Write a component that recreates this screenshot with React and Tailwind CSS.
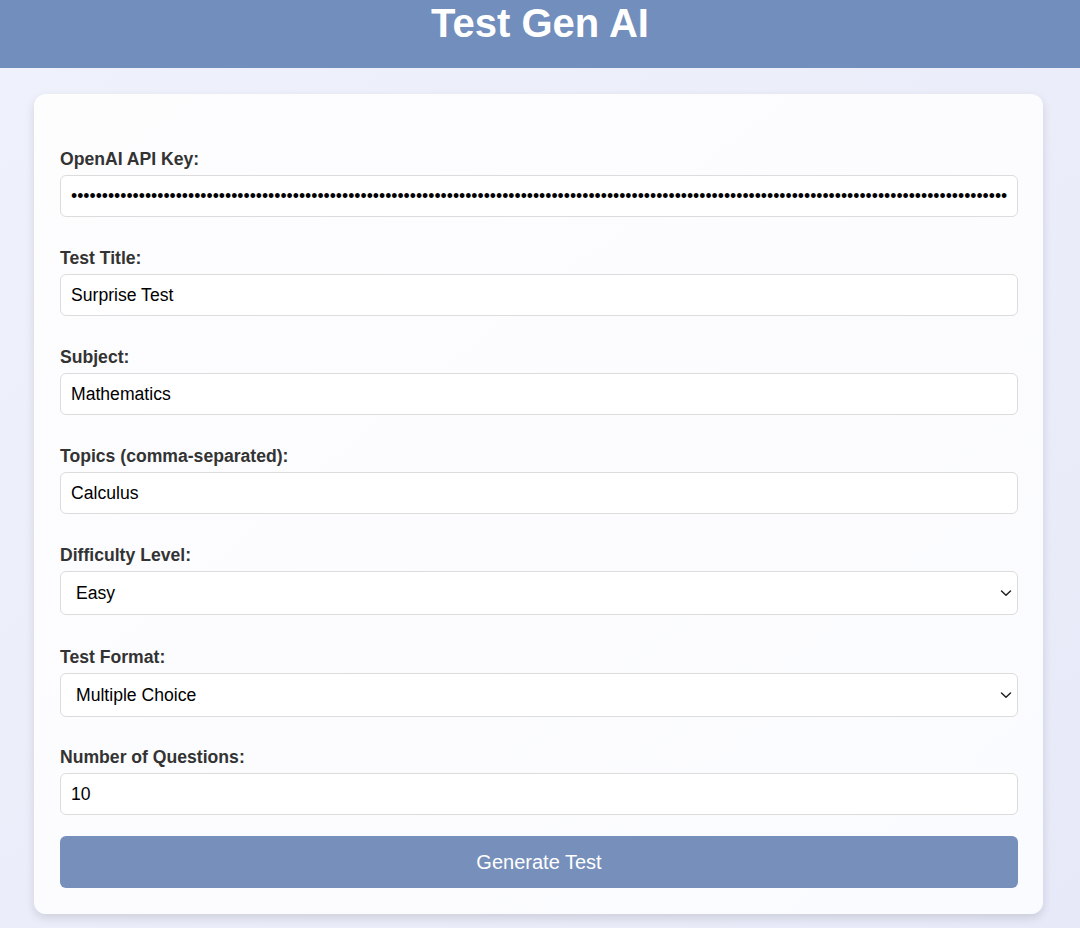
import React from "react";

const font = { fontFamily: '"Liberation Sans", Arial, sans-serif' };

function Label({ children }) {
  return (
    <label className="block text-[17.6px] font-bold leading-[20px] text-[#333333] mb-[6px]">
      {children}
    </label>
  );
}

function TextInput({ value, type = "text" }) {
  return (
    <input
      type={type}
      defaultValue={value}
      className="block w-full h-[42px] rounded-[6px] border border-[#dcdcdc] bg-white px-[10px] text-[17.6px] text-black outline-none"
      style={font}
    />
  );
}

function Select({ value, options }) {
  return (
    <div className="relative">
      <select
        defaultValue={value}
        className="block w-full h-[44px] appearance-none rounded-[6px] border border-[#dcdcdc] bg-white pl-[15px] pr-8 text-[17.6px] text-black outline-none"
        style={font}
      >
        {options.map((o) => (
          <option key={o}>{o}</option>
        ))}
      </select>
      <svg
        className="pointer-events-none absolute right-[6px] top-1/2 -translate-y-1/2"
        width="12"
        height="8"
        viewBox="0 0 12 8"
        fill="none"
      >
        <path d="M1.5 2 L6 6.2 L10.5 2" stroke="#222" strokeWidth="1.5" strokeLinecap="round" strokeLinejoin="round" />
      </svg>
    </div>
  );
}

export default function App() {
  return (
    <div
      className="min-h-screen w-full bg-gradient-to-br from-[#eff2fb] to-[#e7e9f8]"
      style={font}
    >
      <header className="h-[68px] bg-[#728ebc]">
        <h1 className="text-center text-[40px] font-bold leading-[45px] text-white pt-[1px]">
          Test Gen AI
        </h1>
      </header>
      <div className="pt-[26px] pb-[14px]">
        <div className="ml-[34px] w-[1009px] rounded-[12px] bg-gradient-to-br from-[#fdfdfe] to-[#fafbfe] pt-[55px] pb-[26px] pl-[26px] pr-[25px] shadow-[0_4px_10px_rgba(0,0,0,0.12)]">
          <div className="mb-[31px]">
            <Label>OpenAI API Key:</Label>
            <TextInput type="password" value={"x".repeat(220)} />
          </div>
          <div className="mb-[31px]">
            <Label>Test Title:</Label>
            <TextInput value="Surprise Test" />
          </div>
          <div className="mb-[31px]">
            <Label>Subject:</Label>
            <TextInput value="Mathematics" />
          </div>
          <div className="mb-[31px]">
            <Label>Topics (comma-separated):</Label>
            <TextInput value="Calculus" />
          </div>
          <div className="mb-[32px]">
            <Label>Difficulty Level:</Label>
            <Select value="Easy" options={["Easy", "Medium", "Hard"]} />
          </div>
          <div className="mb-[30px]">
            <Label>Test Format:</Label>
            <Select
              value="Multiple Choice"
              options={["Multiple Choice", "True/False", "Short Answer"]}
            />
          </div>
          <div className="mb-[21px]">
            <Label>Number of Questions:</Label>
            <TextInput type="number" value="10" />
          </div>
          <button
            className="block w-full h-[52px] rounded-[6px] bg-[#778fbb] text-[20px] text-white"
            style={font}
          >
            Generate Test
          </button>
        </div>
      </div>
    </div>
  );
}
